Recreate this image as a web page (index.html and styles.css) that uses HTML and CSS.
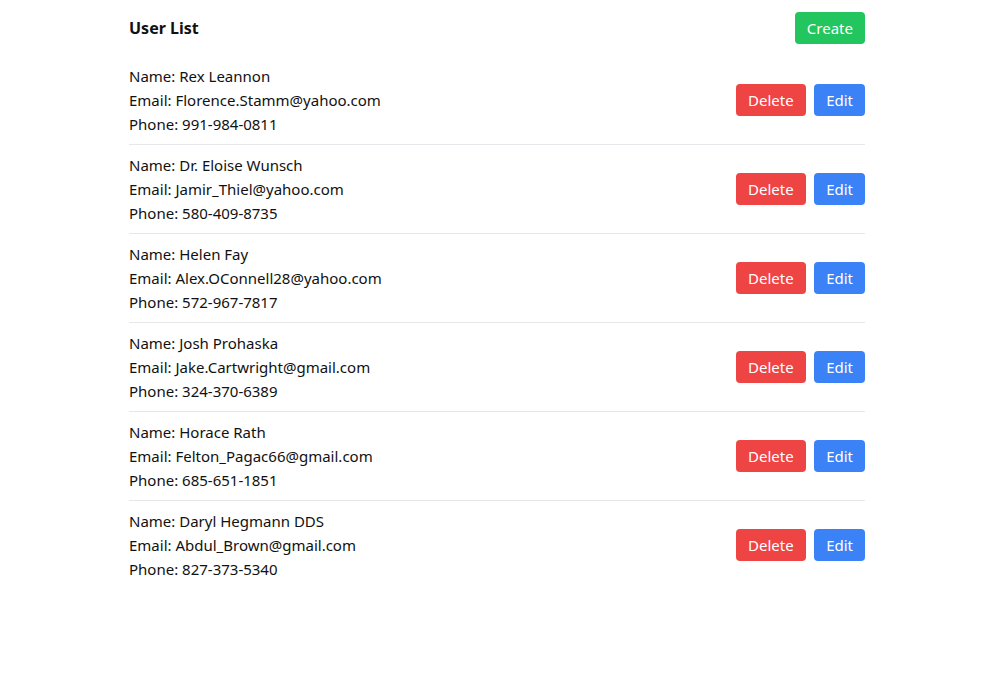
FILE: index.html
```html
<!DOCTYPE html>
<html lang="en">
<head>
<meta charset="utf-8">
<title>User List</title>
<link rel="stylesheet" href="styles.css">
</head>
<body>
<div class="container">
  <div class="header">
    <h1 class="title">User List</h1>
    <button class="btn btn-green">Create</button>
  </div>
  <ul class="list">
    <li class="row">
      <div class="info"><div>Name: Rex Leannon</div><div>Email: Florence.Stamm@yahoo.com</div><div>Phone: 991-984-0811</div></div>
      <div class="actions"><button class="btn btn-red">Delete</button><button class="btn btn-blue">Edit</button></div>
    </li>
    <li class="row">
      <div class="info"><div>Name: Dr. Eloise Wunsch</div><div>Email: Jamir_Thiel@yahoo.com</div><div>Phone: 580-409-8735</div></div>
      <div class="actions"><button class="btn btn-red">Delete</button><button class="btn btn-blue">Edit</button></div>
    </li>
    <li class="row">
      <div class="info"><div>Name: Helen Fay</div><div>Email: Alex.OConnell28@yahoo.com</div><div>Phone: 572-967-7817</div></div>
      <div class="actions"><button class="btn btn-red">Delete</button><button class="btn btn-blue">Edit</button></div>
    </li>
    <li class="row">
      <div class="info"><div>Name: Josh Prohaska</div><div>Email: Jake.Cartwright@gmail.com</div><div>Phone: 324-370-6389</div></div>
      <div class="actions"><button class="btn btn-red">Delete</button><button class="btn btn-blue">Edit</button></div>
    </li>
    <li class="row">
      <div class="info"><div>Name: Horace Rath</div><div>Email: Felton_Pagac66@gmail.com</div><div>Phone: 685-651-1851</div></div>
      <div class="actions"><button class="btn btn-red">Delete</button><button class="btn btn-blue">Edit</button></div>
    </li>
    <li class="row">
      <div class="info"><div>Name: Daryl Hegmann DDS</div><div>Email: Abdul_Brown@gmail.com</div><div>Phone: 827-373-5340</div></div>
      <div class="actions"><button class="btn btn-red">Delete</button><button class="btn btn-blue">Edit</button></div>
    </li>
  </ul>
</div>
</body>
</html>
```
FILE: styles.css
```css
* { box-sizing: border-box; }
html, body { margin: 0; padding: 0; background: #fff; }
body {
  padding-left: 3px;
  font-family: "Noto Sans", "Open Sans", sans-serif;
  font-size: 15px;
  line-height: 24px;
  color: #111;
}
.container {
  width: 736px;
  margin: 0 auto;
  padding-top: 12px;
}
.header {
  display: flex;
  justify-content: space-between;
  align-items: center;
  margin-bottom: 12px;
}
.title {
  margin: 0;
  font-size: 16px;
  font-weight: 700;
  line-height: 28px;
  color: #111;
}
.list { list-style: none; margin: 0; padding: 0; }
.row {
  display: flex;
  justify-content: space-between;
  align-items: center;
  padding: 8px 0;
  border-bottom: 1px solid #e5e7eb;
}
.row:last-child { border-bottom: none; }
.actions { display: flex; gap: 8px; }
.btn {
  font-family: inherit;
  font-size: 15px;
  line-height: 24px;
  padding: 4px 12px;
  border: none;
  border-radius: 4px;
  color: #fff;
}
.btn-green { background: #22c55e; }
.btn-red { background: #ef4444; padding: 4px 12.5px; }
.btn-blue { background: #3b82f6; }
```
